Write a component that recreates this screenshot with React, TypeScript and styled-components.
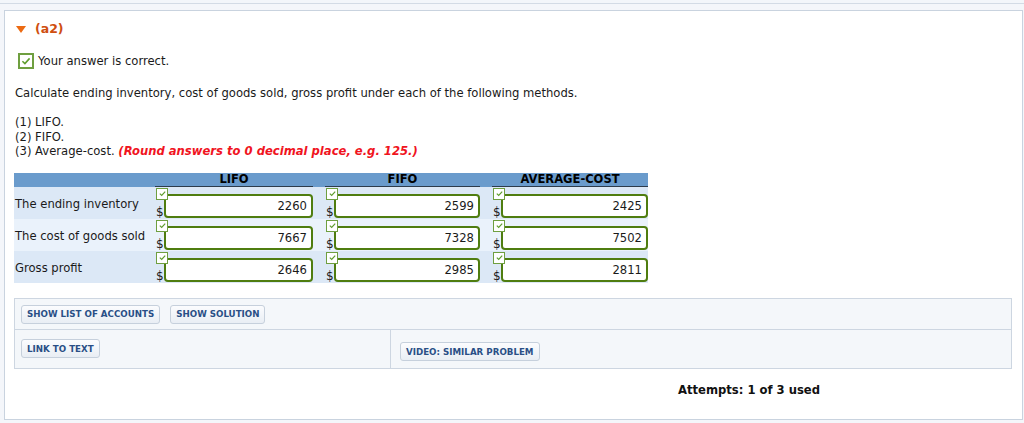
import React from "react";
import styled, { createGlobalStyle } from "styled-components";

const GlobalStyle = createGlobalStyle`
  body {
    margin: 0;
    background: #f4f6fa;
    font-family: "DejaVu Sans", Verdana, sans-serif;
    color: #1a1a1a;
  }
`;

const rows = [
  { label: "The ending inventory", values: ["2260", "2599", "2425"] },
  { label: "The cost of goods sold", values: ["7667", "7328", "7502"] },
  { label: "Gross profit", values: ["2646", "2985", "2811"] },
];

const Tick = ({ size }: { size: number }) => (
  <svg width={size} height={size} viewBox="0 0 10 10">
    <path d="M2 5.2 L4.1 7.2 L8 2.8" fill="none" stroke="#5f9d2d" strokeWidth="1.3" />
  </svg>
);

const App = () => {
  return (
    <Page>
      <GlobalStyle />
      <TopStrip />
      <Panel>
        <Title>
          <Arrow />
          (a2)
        </Title>
        <Correct>
          <BigCheck>
            <Tick size={12} />
          </BigCheck>
          Your answer is correct.
        </Correct>
        <Para>
          Calculate ending inventory, cost of goods sold, gross profit under each of the following methods.
        </Para>
        <List>
          <div>(1) LIFO.</div>
          <div>(2) FIFO.</div>
          <div>
            (3) Average-cost. <Hint>(Round answers to 0 decimal place, e.g. 125.)</Hint>
          </div>
        </List>
        <Table>
          <HeadRow>
            <span />
            <Head>LIFO</Head>
            <Head>FIFO</Head>
            <Head>AVERAGE-COST</Head>
          </HeadRow>
          {rows.map((r, i) => (
            <Row key={r.label} alt={i % 2 === 1}>
              <Label>{r.label}</Label>
              {r.values.map((v) => (
                <Cell key={v}>
                  <SmallCheck>
                    <Tick size={9} />
                  </SmallCheck>
                  <Dollar>$</Dollar>
                  <Input>{v}</Input>
                </Cell>
              ))}
            </Row>
          ))}
        </Table>
        <Tools>
          <ToolRow>
            <Button>SHOW LIST OF ACCOUNTS</Button>
            <Button>SHOW SOLUTION</Button>
          </ToolRow>
          <SplitRow>
            <LeftCell>
              <Button>LINK TO TEXT</Button>
            </LeftCell>
            <RightCell>
              <Button>VIDEO: SIMILAR PROBLEM</Button>
            </RightCell>
          </SplitRow>
        </Tools>
        <Attempts>Attempts: 1 of 3 used</Attempts>
      </Panel>
    </Page>
  );
};

export default App;

const Page = styled.div`
  width: 1024px;
  height: 423px;
  overflow: hidden;
`;

const TopStrip = styled.div`
  height: 3px;
  background: #f3f6fa;
  border-bottom: 1px solid #d3dbe5;
  margin-bottom: 6px;
`;

const Panel = styled.div`
  margin: 0 1px 0 4px;
  height: 410px;
  background: #fff;
  border: 1px solid #c9d3df;
  box-sizing: border-box;
  padding: 9px 9px 0 9px;
`;

const Title = styled.div`
  display: flex;
  align-items: center;
  gap: 9px;
  padding-left: 2px;
  font-size: 12.5px;
  font-weight: bold;
  color: #cf4e10;
  height: 16px;
`;

const Arrow = styled.span`
  width: 0;
  height: 0;
  border-left: 5.5px solid transparent;
  border-right: 5.5px solid transparent;
  border-top: 7px solid #ec6a12;
  margin-top: 2px;
`;

const Correct = styled.div`
  display: flex;
  align-items: center;
  gap: 4px;
  margin-top: 17px;
  padding-left: 4px;
  font-size: 11.6px;
  height: 16px;
`;

const BigCheck = styled.span`
  width: 16px;
  height: 16px;
  box-sizing: border-box;
  border: 2px solid #6f9f40;
  background: #fff;
  display: flex;
  align-items: center;
  justify-content: center;
`;

const Para = styled.div`
  margin-top: 17px;
  font-size: 11.6px;
  line-height: 14px;
  padding-left: 1px;
`;

const List = styled.div`
  margin-top: 15px;
  font-size: 11.6px;
  line-height: 14.5px;
  padding-left: 1px;
`;

const Hint = styled.span`
  color: #f0141e;
  font-weight: bold;
  font-style: italic;
`;

const Table = styled.div`
  margin-top: 14px;
  width: 634px;
`;

const grid = `
  display: grid;
  grid-template-columns: 129px 158px 155px 156px;
  column-gap: 12px;
`;

const HeadRow = styled.div`
  ${grid};
  height: 14px;
  background: #6a9bcc;
`;

const Head = styled.div`
  border-bottom: 1px solid #2c3b4c;
  font-size: 11.5px;
  font-weight: bold;
  text-align: center;
  line-height: 13px;
  color: #000;
`;

const Row = styled.div<{ alt: boolean }>`
  ${grid};
  height: 32px;
  background: ${({ alt }) => (alt ? "#eaf2fb" : "#dce8f6")};
`;

const Label = styled.div`
  font-size: 11.6px;
  padding: 10px 0 0 1px;
  white-space: nowrap;
`;

const Cell = styled.div`
  position: relative;
  display: flex;
  align-items: flex-end;
  padding: 7px 0 1px 0;
`;

const SmallCheck = styled.span`
  position: absolute;
  left: 1px;
  top: 1px;
  width: 12px;
  height: 12px;
  box-sizing: border-box;
  border: 1px solid #6f9f40;
  background: #fff;
  display: flex;
  align-items: center;
  justify-content: center;
`;

const Dollar = styled.span`
  font-size: 12px;
  line-height: 12px;
  width: 8px;
  padding-left: 1px;
`;

const Input = styled.div`
  flex: 1;
  height: 24px;
  box-sizing: border-box;
  border: 2px solid #4f7d10;
  border-radius: 4px;
  background: #fff;
  font-size: 11.6px;
  line-height: 20px;
  text-align: right;
  padding-right: 4px;
`;

const Tools = styled.div`
  margin-top: 15px;
  width: 998px;
  box-sizing: border-box;
  border: 1px solid #cdd6e1;
  background: #f4f7fa;
`;

const ToolRow = styled.div`
  display: flex;
  gap: 10px;
  height: 31px;
  padding: 6px 0 0 6px;
  box-sizing: border-box;
  border-bottom: 1px solid #cdd6e1;
`;

const SplitRow = styled.div`
  display: flex;
  height: 38px;
`;

const LeftCell = styled.div`
  width: 376px;
  padding: 7px 0 0 6px;
  border-right: 1px solid #cdd6e1;
  box-sizing: border-box;
`;

const RightCell = styled.div`
  flex: 1;
  padding: 10px 0 0 9px;
`;

const Button = styled.span`
  display: inline-flex;
  align-items: center;
  height: 19px;
  padding: 0 5px;
  box-sizing: border-box;
  border: 1px solid #c6d0dc;
  border-radius: 3px;
  background: linear-gradient(#fbfcfe, #e9eef4);
  font-size: 8.7px;
  font-weight: bold;
  color: #2a4f86;
  white-space: nowrap;
`;

const Attempts = styled.div`
  margin-top: 14px;
  padding-left: 664px;
  font-size: 11.6px;
  font-weight: bold;
  color: #111;
`;
